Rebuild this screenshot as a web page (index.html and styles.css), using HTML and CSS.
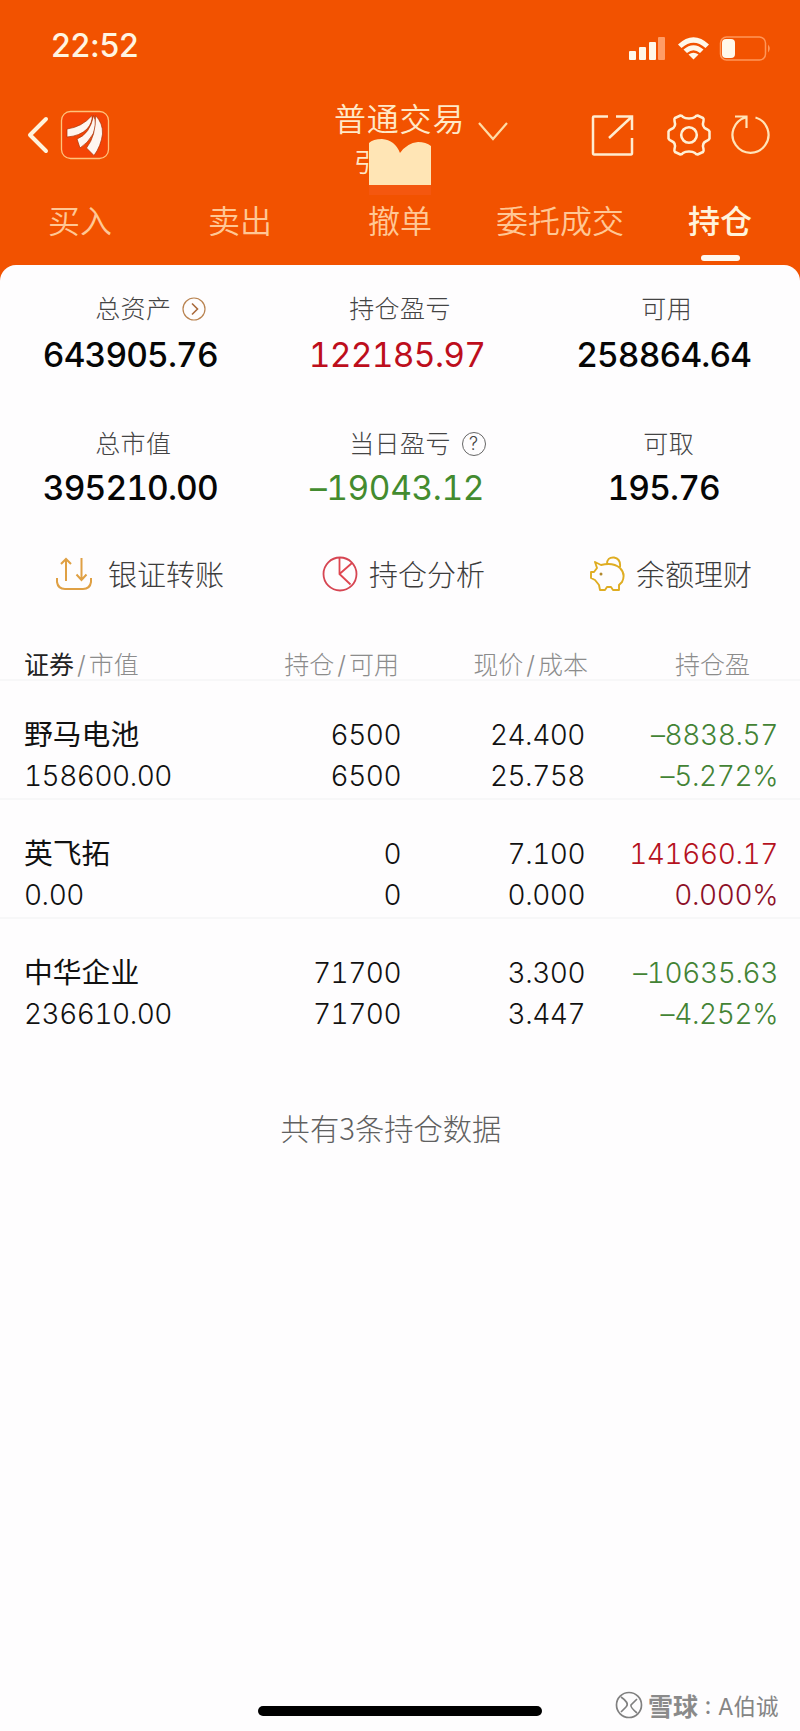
FILE: index.html
```html
<!DOCTYPE html>
<html lang="zh-CN">
<head>
<meta charset="utf-8">
<title>普通交易 - 持仓</title>
<link rel="stylesheet" href="styles.css">
</head>
<body>
<div class="app">
  <header class="header">
    <div class="status">
      <span class="time">22:52</span>
      <svg class="status-icons" viewBox="0 0 146 26" width="146" height="26">
        <g fill="#fff8ea">
          <rect x="1" y="16" width="7" height="9" rx="1"/>
          <rect x="11" y="12" width="7" height="13" rx="1"/>
          <rect x="21" y="7" width="7" height="18" rx="1"/>
          <rect x="30" y="2" width="7" height="23" rx="1" fill="#ff9c66"/>
          <path d="M50 9.500Q65.500 -5 81 9.500L77.500 13Q65.500 2.500 53.500 13Z"/>
          <path d="M55.500 14.500Q65.500 6 75.500 14.500L72 18Q65.500 12.500 59 18Z"/>
          <path d="M60.500 19.500Q65.500 16 70.500 19.500L65.500 24.500Z"/>
          <rect x="94" y="4" width="13" height="19" rx="4"/>
        </g>
        <rect x="92.500" y="2" width="45" height="23" rx="6" fill="none" stroke="#ff9658" stroke-width="1.500"/>
        <path d="M140 9.500Q143.500 13.500 140 17.500Z" fill="#ff9658"/>
      </svg>
    </div>
    <div class="nav">
      <svg class="back" viewBox="0 0 24 38" width="24" height="38"><path d="M20 3L4 19L20 35" fill="none" stroke="#fff3dc" stroke-width="4" stroke-linecap="round" stroke-linejoin="round"/></svg>
      <svg class="logo" viewBox="0 0 50 50" width="50" height="50">
        <rect x="1.500" y="1.500" width="47" height="47" rx="9" fill="#f44405" stroke="#ffc27c" stroke-width="1.300"/>
        <g fill="#fff6f0" stroke="#a83206" stroke-width=".7">
          <path d="M7 19Q22 17 32 5.500Q33 12 27 19Q20 26 7 27Z"/>
          <path d="M17 29Q30 24 33.500 5.500Q38 14 33 24Q28 33 20 38Z"/>
          <path d="M26.500 38Q36 26 35.500 5.500Q43 13 42.500 24Q41 36 34 45.500Z"/>
        </g>
      </svg>
      <div class="account">
        <div class="account-title">普通交易</div>
        <div class="account-name">引<svg class="mask" viewBox="0 0 62 56" width="62" height="56"><rect y="46" width="62" height="10" fill="#f4570f"/><path d="M0 46V4Q4 0 13 0Q26 1 31 14Q38 4 49 3Q57 3 62 7V46Z" fill="#ffe5b5"/></svg></div>
      </div>
      <svg class="drop" viewBox="0 0 32 22" width="32" height="22"><path d="M2 2L16 18L30 2" fill="none" stroke="#ffdca5" stroke-width="2.200"/></svg>
      <div class="tools">
        <svg viewBox="0 0 44 44" width="44" height="44"><path d="M18 3.500H4Q3 3.500 3 4.500V40Q3 41.500 4 41.500H41Q42 41.500 42 40V25M26 3.500H42V17M42 3.500L19 25" fill="none" stroke="#ffecd0" stroke-width="2.500"/></svg>
        <svg class="gear" viewBox="-22 -22 44 44" width="44" height="44"><path d="M20.500 -3.500V3.500Q20 5 17.500 6Q12.500 8 14.500 14Q15 16 14 17L8.500 19.500Q7 19.500 6 18Q4 16.500 0 16.500Q-4 16.500 -6 18Q-7 19.500 -8.500 19.500L-14 17Q-15 16 -14.500 14Q-12.500 8 -17.500 6Q-20 5 -20.500 3.500V-3.500Q-20 -5 -17.500 -6Q-12.500 -8 -14.500 -14Q-15 -16 -14 -17L-8.500 -19.500Q-7 -19.500 -6 -18Q-4 -16.500 0 -16.500Q4 -16.500 6 -18Q7 -19.500 8.500 -19.500L14 -17Q15 -16 14.500 -14Q12.500 -8 17.500 -6Q20 -5 20.500 -3.500Z" fill="none" stroke="#fff0d5" stroke-width="2.500" stroke-linejoin="round"/><circle r="7.800" fill="none" stroke="#fff0d5" stroke-width="2.600"/></svg>
        <svg class="refresh" viewBox="0 0 42 42" width="42" height="42"><path d="M25.500 3.500A18 18 0 1 1 15.500 3.500M5 2.500H16.500V14" fill="none" stroke="#ffe4b8" stroke-width="2.200"/></svg>
      </div>
    </div>
    <nav class="tabs">
      <a class="tab">买入</a><a class="tab">卖出</a><a class="tab">撤单</a><a class="tab">委托成交</a><a class="tab active">持仓</a>
    </nav>
  </header>

  <main class="panel">
    <section class="stats">
      <div class="stat"><div class="label">总资产<svg class="hint" viewBox="0 0 24 24" width="24" height="24"><circle cx="12" cy="12" r="11" fill="none" stroke="#b98350" stroke-width="1.200"/><path d="M10 6.500L15.500 12L10 17.500" fill="none" stroke="#a96a3c" stroke-width="1.600"/></svg></div><div class="value">643905.76</div></div>
      <div class="stat"><div class="label">持仓盈亏</div><div class="value up">122185.97</div></div>
      <div class="stat"><div class="label">可用</div><div class="value">258864.64</div></div>
      <div class="stat second"><div class="label">总市值</div><div class="value">395210.00</div></div>
      <div class="stat second"><div class="label">当日盈亏<span class="hint question">?</span></div><div class="value down">–19043.12</div></div>
      <div class="stat second"><div class="label shifted">可取</div><div class="value">195.76</div></div>
    </section>

    <section class="actions">
      <div class="action transfer"><svg viewBox="0 0 36 36" width="36" height="36"><path d="M1 22V26Q2 33 9 33H27Q34 33 35 26V22M10 25V3M5 8L10 3L15 8M25.500 2V24M20.500 18.500L25.500 24L30.500 18.500" fill="none" stroke="#dfa044" stroke-width="2"/></svg><span>银证转账</span></div>
      <div class="action analysis"><svg viewBox="0 0 36 36" width="36" height="36"><path d="M17.500 2V18L28.500 28.500M17.500 18L30 7" fill="none" stroke="#df4650" stroke-width="1.800"/><circle cx="18" cy="18" r="16.500" fill="none" stroke="#d64552" stroke-width="1.800"/></svg><span>持仓分析</span></div>
      <div class="action finance"><svg viewBox="0 0 36 36" width="36" height="36"><path d="M18 8Q18 1 25 1.500Q32 3 31 11M6 6L12 9Q24 6 31 12Q37 18 33 26L30 29V34H24L22 31H18L16 34H11L10 29L6 24L2 22V16H5L8 12L6 6Z" fill="none" stroke="#dfad22" stroke-width="1.900" stroke-linejoin="round"/><circle cx="12" cy="18" r="1.500" fill="#b2892d"/></svg><span>余额理财</span></div>
    </section>

    <section class="holdings">
      <div class="row head"><div><b>证券</b><i>/</i>市值</div><div>持仓<i>/</i>可用</div><div>现价<i>/</i>成本</div><div>持仓盈</div></div>
      <div class="row"><div><p class="name">野马电池</p><p>158600.00</p></div><div><p>6500</p><p>6500</p></div><div><p>24.400</p><p>25.758</p></div><div class="down"><p>–8838.57</p><p>–5.272%</p></div></div>
      <div class="row"><div><p class="name">英飞拓</p><p>0.00</p></div><div><p>0</p><p>0</p></div><div><p>7.100</p><p>0.000</p></div><div class="up"><p>141660.17</p><p class="dark">0.000%</p></div></div>
      <div class="row"><div><p class="name">中华企业</p><p>236610.00</p></div><div><p>71700</p><p>71700</p></div><div><p>3.300</p><p>3.447</p></div><div class="down"><p>–10635.63</p><p>–4.252%</p></div></div>
    </section>
    <div class="summary">共有3条持仓数据</div>
  </main>

  <footer class="footer">
    <div class="home"></div>
    <div class="watermark"><svg viewBox="0 0 28 28" width="28" height="28"><g fill="none" stroke="#808080" stroke-width="1.700"><circle cx="14" cy="14" r="12.500"/><path d="M6 6Q15 12 11 16L6 21M22 8L16 14Q15 16 22 22"/></g></svg><b>雪球</b><i>:</i><span>A伯诚</span></div>
  </footer>
</div>
</body>
</html>
```
FILE: styles.css
```css
* { box-sizing: border-box; }
body { margin: 0; background: #fefdfe; }
p { margin: 0; }
.app {
  width: 800px; height: 1731px; display: flex; flex-direction: column; overflow: hidden;
  font-family: Inter, "Noto Sans CJK SC", sans-serif; color: #111; background: #f25200;
}
.header { height: 265px; flex: none; color: #ffe9c8; }
.status { height: 90px; padding: 29px 26px 0 51px; display: flex; justify-content: space-between; }
.time { font-size: 32px; line-height: 34px; font-weight: 500; letter-spacing: -.2px; color: #fff5e2; }
.status-icons { margin-top: 6px; }
.nav { height: 100px; display: flex; padding-left: 26px; }
.back { margin-top: 26px; }
.logo { margin: 20px 0 0 10px; }
.account { margin-left: 224px; width: 132px; }
.account-title { font-size: 32px; line-height: 36px; margin-top: 12px; font-weight: 350; letter-spacing: .8px; white-space: nowrap; }
.account-name { font-size: 26px; line-height: 30px; margin-top: 10px; padding-left: 20px; position: relative; font-weight: 350; }
.mask { position: absolute; left: 35px; top: -9px; }
.drop { margin: 31px 0 0 11px; }
.tools { display: flex; margin: 23px 0 0 81px; }
.gear { margin-left: 33px; }
.refresh { margin: 1px 0 0 19px; }
.tabs { display: grid; grid-template-columns: repeat(5, 160px); }
.tab {
  font-size: 32px; line-height: 40px; height: 71px; padding-top: 12px; text-align: center; font-weight: 350; color: #ffc795;
  display: flex; flex-direction: column; align-items: center;
}
.tab.active { font-weight: 500; color: #fff3dc; }
.tab.active::after { content: ""; width: 39px; height: 6px; border-radius: 3px; background: #fff8ee; margin-top: 13px; }

.panel { flex: 1; background: #fefdfe; border-radius: 16px 16px 0 0; }
.stats { display: grid; grid-template-columns: repeat(3, 1fr); grid-template-rows: 134px 134px; padding-top: 29px; }
.stat { display: flex; flex-direction: column; align-items: center; }
.label { font-size: 25px; line-height: 30px; font-weight: 300; letter-spacing: .4px; color: #444; display: flex; align-items: center; }
.label.shifted { padding-left: 4px; }
.hint { margin: 0 -35px 0 11px; width: 24px; height: 24px; flex: none; }
.question { border: 1.2px solid #666; border-radius: 50%; font-size: 18px; line-height: 22px; text-align: center; }
.value { font-size: 33.500px; line-height: 40px; margin: 11px 6px 0 0; font-weight: 450; font-feature-settings: "tnum"; letter-spacing: -.85px; color: #060606; }
.second { padding-top: 1px; }
.second .value { margin-top: 9px; }
.up { color: #b5121e; }
.down { color: #438335; }
.value.up { color: #bd0e1c; font-weight: 400; letter-spacing: -.7px; }
.value.down { color: #438b2f; font-weight: 400; letter-spacing: -.4px; }
.actions { display: grid; grid-template-columns: 267px 266px 267px; height: 64px; margin-top: -8px; }
.action { display: flex; align-items: center; font-size: 29px; font-weight: 300; color: #3c3c3c; height: 40px; white-space: nowrap; }
.action span { padding-bottom: 2px; }
.transfer { padding-left: 56px; gap: 16px; }
.analysis { padding-left: 55px; gap: 11px; }
.finance { padding-left: 56px; gap: 11px; }

.holdings { padding-top: 1px; }
.row {
  display: grid; grid-template-columns: 226px 151px 184px 193px; padding: 34px 22px 0 24px; height: 119px;
  border-bottom: 2px solid #f7f7f8; font-size: 28px; line-height: 40.500px; font-weight: 300;
  font-feature-settings: "tnum"; letter-spacing: -.5px;
}
.row:last-child { border-bottom: 0; }
.row > div { text-align: right; }
.row > div:first-child { text-align: left; }
.row .name { font-size: 28.800px; font-weight: 400; letter-spacing: 0; }
.row .down, .row.down, .row > .down, .row > .up { letter-spacing: -.4px; }
.row .dark { color: #8d1028; }
.row.head { height: 62px; padding-top: 28px; font-size: 25px; line-height: 36px; color: #8c8c8c; letter-spacing: 0; }
.row.head b { font-weight: 400; color: #222; }
.row.head i { font-style: normal; padding: 0 3px; }
.row.head > div:nth-child(2) { padding-right: 2px; }
.row.head > div:nth-child(3) { margin-right: -3px; }
.row.head > div:nth-child(4) { padding-right: 28px; }
.summary { margin-top: 69px; font-family: "Noto Sans CJK SC", sans-serif; font-size: 29.300px; line-height: 40px; font-weight: 300; color: #606060; text-align: center; padding-right: 18px; }
.footer { height: 46px; flex: none; background: #fefdfe; display: flex; align-items: flex-start; }
.home { width: 284px; height: 10px; flex: none; border-radius: 5px; background: #000; margin: 21px 0 0 258px; }
.watermark { display: flex; align-items: center; margin: 4px 0 0 73px; height: 32px; color: #858585; white-space: nowrap; }
.watermark b { margin-left: 5px; font-size: 25px; font-weight: 700; color: #8a8a8a; }
.watermark i { font-style: normal; font-size: 24px; width: 20px; text-align: center; }
.watermark span { font-size: 22.500px; }
```
